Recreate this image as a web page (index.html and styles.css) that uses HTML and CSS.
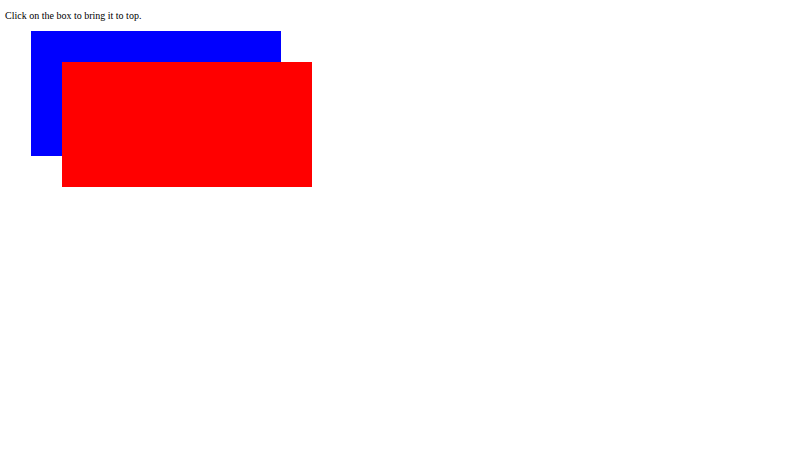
FILE: index.html
```html
<!DOCTYPE html>
<html>
<head>
<meta charset="utf-8">
<link rel="stylesheet" href="styles.css">
</head>
<body>
<p class="hint">Click on the box to bring it to top.</p>
<div class="stage">
  <div class="box box-blue"></div>
  <div class="box box-red"></div>
</div>
</body>
</html>
```
FILE: styles.css
```css
html, body {
  margin: 0;
  padding: 0;
  background: #ffffff;
}
body {
  font-family: "Liberation Serif", "Times New Roman", serif;
  font-size: 10px;
  color: #000000;
}
.hint {
  margin: 0;
  padding: 10px 0 0 5px;
  line-height: 12px;
}
.stage {
  padding-top: 9px;
}
.box {
  display: block;
  width: 250px;
  height: 125px;
}
.box-blue {
  margin-left: 31px;
  background-color: #0000ff;
}
.box-red {
  position: relative;
  margin-left: 62px;
  margin-top: -94px;
  background-color: #ff0000;
}
```
